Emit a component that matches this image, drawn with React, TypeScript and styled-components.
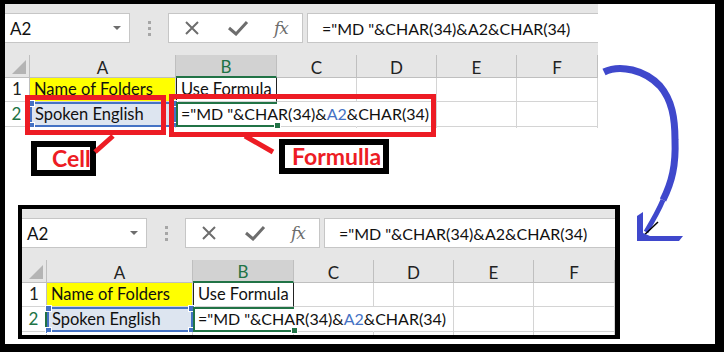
import styled, { createGlobalStyle } from "styled-components";

const GlobalStyle = createGlobalStyle`
  html, body {
    margin: 0;
    padding: 0;
    background: #fff;
  }
`;

const RED = "#ed1c24";
const GREEN = "#217346";
const BLUE = "#4472c4";
const GRID = "#d4d4d4";
const FONT = `Lato, "Open Sans", sans-serif`;

const Page = styled.div`
  position: relative;
  width: 724px;
  height: 352px;
  box-sizing: border-box;
  border-style: solid;
  border-color: #000;
  border-width: 4px 9px 8px 5px;
  background: #fff;
  overflow: hidden;
  display: flex;
  flex-direction: column;
  align-items: flex-start;
`;

const Framed = styled.div`
  margin: 77px 0 0 13px;
  border: 4px solid #000;
  border-right-width: 5px;
`;

const SheetWrap = styled.div<{ $h: number }>`
  width: 593px;
  height: ${(p) => p.$h}px;
  overflow: hidden;
  background: #fff;
  font-family: ${FONT};
  color: #111;
`;

const Toolbar = styled.div`
  display: flex;
  align-items: center;
  height: 51px;
  box-sizing: border-box;
  padding: 9px 0 12px;
  background: #e6e6e6;
`;

const Box = styled.div`
  height: 30px;
  box-sizing: border-box;
  background: #fff;
  border: 1px solid #c6c6c6;
  display: flex;
  align-items: center;
`;

const NameBox = styled(Box)`
  width: 125px;
  padding: 0 8px 0 5px;
  border-left: none;
  justify-content: space-between;
  font-size: 17px;
`;

const Caret = styled.span`
  width: 0;
  height: 0;
  border-left: 4px solid transparent;
  border-right: 4px solid transparent;
  border-top: 4px solid #6d6d6d;
`;

const Grip = styled.div`
  width: 38px;
  display: flex;
  flex-direction: column;
  align-items: center;
  gap: 3px;
  i {
    width: 3px;
    height: 3px;
    background: #a6a6a6;
  }
`;

const FnBox = styled(Box)`
  width: 135px;
  padding: 0 0 0 15px;
  svg {
    display: block;
  }
`;

const Fx = styled.span`
  font-family: "DejaVu Serif", "Liberation Serif", serif;
  font-style: italic;
  font-size: 17px;
  color: #6d6d6d;
  margin-left: 25px;
  letter-spacing: -1px;
`;

const FormulaBox = styled(Box)`
  flex: 1;
  margin-left: 4px;
  border-right: none;
  padding-left: 14px;
  font-size: 16px;
  white-space: nowrap;
`;

const Grid = styled.div`
  display: grid;
  grid-template-columns: 25px 146px 101px 80px 80px 80px 81px;
  grid-template-rows: 23px 24px 25px 24px;
`;

const Corner = styled.div`
  background: #e6e6e6;
  border-right: 1px solid #bfbfbf;
  border-bottom: 1px solid #bfbfbf;
  position: relative;
  &::after {
    content: "";
    position: absolute;
    right: 3px;
    bottom: 3px;
    border-left: 14px solid transparent;
    border-bottom: 14px solid #b4b4b4;
  }
`;

const ColHead = styled.div<{ $active?: boolean }>`
  background: ${(p) => (p.$active ? "#d2d2d2" : "#e6e6e6")};
  color: ${(p) => (p.$active ? GREEN : "#222")};
  border-right: 1px solid #bfbfbf;
  border-bottom: ${(p) => (p.$active ? `2px solid ${GREEN}` : "1px solid #bfbfbf")};
  display: flex;
  align-items: center;
  justify-content: center;
  font-size: 17px;
  padding-top: 2px;
`;

const RowHead = styled.div<{ $active?: boolean }>`
  background: #fff;
  color: ${(p) => (p.$active ? GREEN : "#222")};
  border-right: ${(p) => (p.$active ? `2px solid ${GREEN}` : "1px solid #bfbfbf")};
  border-bottom: 1px solid ${GRID};
  display: flex;
  align-items: flex-end;
  justify-content: center;
  padding-bottom: 4px;
  box-sizing: border-box;
  font-size: 17px;
  line-height: 1;
`;

const Cell = styled.div<{ $bg?: string; $boxed?: boolean; $open?: boolean }>`
  position: relative;
  box-sizing: border-box;
  background: ${(p) => p.$bg ?? "#fff"};
  border-right: 1px solid ${(p) => (p.$boxed ? "#222" : p.$open ? "transparent" : GRID)};
  border-left: ${(p) => (p.$boxed ? "1px solid #222" : "none")};
  border-bottom: 1px solid ${GRID};
  display: flex;
  align-items: flex-end;
  padding: 0 0 4px 4px;
  font-size: 16.5px;
  line-height: 1;
  white-space: nowrap;
`;

const RefCell = styled(Cell)`
  background: #dde5f0;
  border: 2px solid ${BLUE};
  padding: 0 0 3px 3px;
`;

const ActiveCell = styled(Cell)`
  z-index: 2;
  overflow: visible;
  border: 2px solid ${GREEN};
  border-right: none;
  padding: 0 0 3px 3px;
  background: transparent;
  font-size: 16px;
`;

const Handle = styled.i<{ $color: string; $corner: "tl" | "tr" | "bl" | "br" }>`
  position: absolute;
  width: 5px;
  height: 5px;
  background: ${(p) => p.$color};
  border: 1px solid #fff;
  ${(p) => (p.$corner[0] === "t" ? "top: -4px;" : "bottom: -4px;")}
  ${(p) => (p.$corner[1] === "l" ? "left: -4px;" : "right: -4px;")}
`;

const Ref = styled.span`
  color: ${BLUE};
`;

const Overlay = styled.div`
  position: absolute;
  top: -4px;
  left: -5px;
  width: 724px;
  height: 352px;
  pointer-events: none;
`;

const Drawing = styled.svg`
  position: absolute;
  inset: 0;
`;

const RedBox = styled.div<{ $x: number; $y: number; $w: number; $h: number }>`
  position: absolute;
  left: ${(p) => p.$x}px;
  top: ${(p) => p.$y}px;
  width: ${(p) => p.$w}px;
  height: ${(p) => p.$h}px;
  box-sizing: border-box;
  border: 5px solid ${RED};
`;

const Label = styled.div<{ $x: number; $y: number; $w: number; $h: number; $pad: number }>`
  position: absolute;
  left: ${(p) => p.$x}px;
  top: ${(p) => p.$y}px;
  width: ${(p) => p.$w}px;
  height: ${(p) => p.$h}px;
  box-sizing: border-box;
  border: 6px solid #000;
  background: #fff;
  color: ${RED};
  font-family: ${FONT};
  font-weight: 700;
  font-size: 23px;
  line-height: 1;
  display: flex;
  align-items: center;
  padding-left: ${(p) => p.$pad}px;
`;

const COLS = ["A", "B", "C", "D", "E", "F"];

function Sheet({ height }: { height: number }) {
  return (
    <SheetWrap $h={height}>
      <Toolbar>
        <NameBox>
          A2
          <Caret />
        </NameBox>
        <Grip>
          <i />
          <i />
          <i />
        </Grip>
        <FnBox>
          <svg width="16" height="16" viewBox="0 0 16 16">
            <path d="M2 2 L14 14 M14 2 L2 14" stroke="#6d6d6d" strokeWidth="2" fill="none" />
          </svg>
          <svg width="22" height="16" viewBox="0 0 22 16" style={{ marginLeft: 27 }}>
            <path d="M2 8 L9 14 L20 2" stroke="#6d6d6d" strokeWidth="3" fill="none" />
          </svg>
          <Fx>fx</Fx>
        </FnBox>
        <FormulaBox>="MD "&amp;CHAR(34)&amp;A2&amp;CHAR(34)</FormulaBox>
      </Toolbar>
      <Grid>
        <Corner />
        {COLS.map((c) => (
          <ColHead key={c} $active={c === "B"}>
            {c}
          </ColHead>
        ))}
        <RowHead>1</RowHead>
        <Cell $bg="#ffff00">Name of Folders</Cell>
        <Cell $boxed>Use Formula</Cell>
        <Cell />
        <Cell />
        <Cell />
        <Cell />
        <RowHead $active>2</RowHead>
        <RefCell>
          Spoken English
          <Handle $color={BLUE} $corner="tl" />
          <Handle $color={BLUE} $corner="tr" />
          <Handle $color={BLUE} $corner="bl" />
          <Handle $color={BLUE} $corner="br" />
        </RefCell>
        <ActiveCell>
          ="MD "&amp;CHAR(34)&amp;<Ref>A2</Ref>&amp;CHAR(34)
          <Handle $color={GREEN} $corner="br" />
        </ActiveCell>
        <Cell $open />
        <Cell />
        <Cell />
        <Cell />
        <RowHead />
        <Cell />
        <Cell />
        <Cell />
        <Cell />
        <Cell />
        <Cell />
      </Grid>
    </SheetWrap>
  );
}

export default function App() {
  return (
    <>
      <GlobalStyle />
      <Page>
        <Sheet height={124} />
        <Framed>
          <Sheet height={126} />
        </Framed>
        <Overlay>
          <RedBox $x={25} $y={95} $w={141} $h={40} />
          <RedBox $x={169} $y={94} $w={267} $h={43} />
          <Label $x={31} $y={141} $w={65} $h={35} $pad={15}>
            Cell
          </Label>
          <Label $x={279} $y={139} $w={110} $h={35} $pad={7}>
            Formulla
          </Label>
          <Drawing width="724" height="352" viewBox="0 0 724 352">
            <path d="M113 136 L95 152 M245 136 L273 152" stroke={RED} strokeWidth="5" fill="none" />
            <path
              d="M604 72 C620 64 645 70 660 86 C672 100 675 118 675 140 C676 165 672 182 663 200"
              stroke="#3f48cc"
              strokeWidth="7"
              fill="none"
            />
            <path d="M663 200 C658 212 652 222 646 232" stroke="#3f48cc" strokeWidth="5" fill="none" />
            <path d="M658 222 L639 240" stroke="#000" strokeWidth="1.5" fill="none" />
            <polygon
              points="637,216 643,212 643,233 650,236 683,236 679,241 637,241"
              fill="#3f48cc"
            />
          </Drawing>
        </Overlay>
      </Page>
    </>
  );
}
